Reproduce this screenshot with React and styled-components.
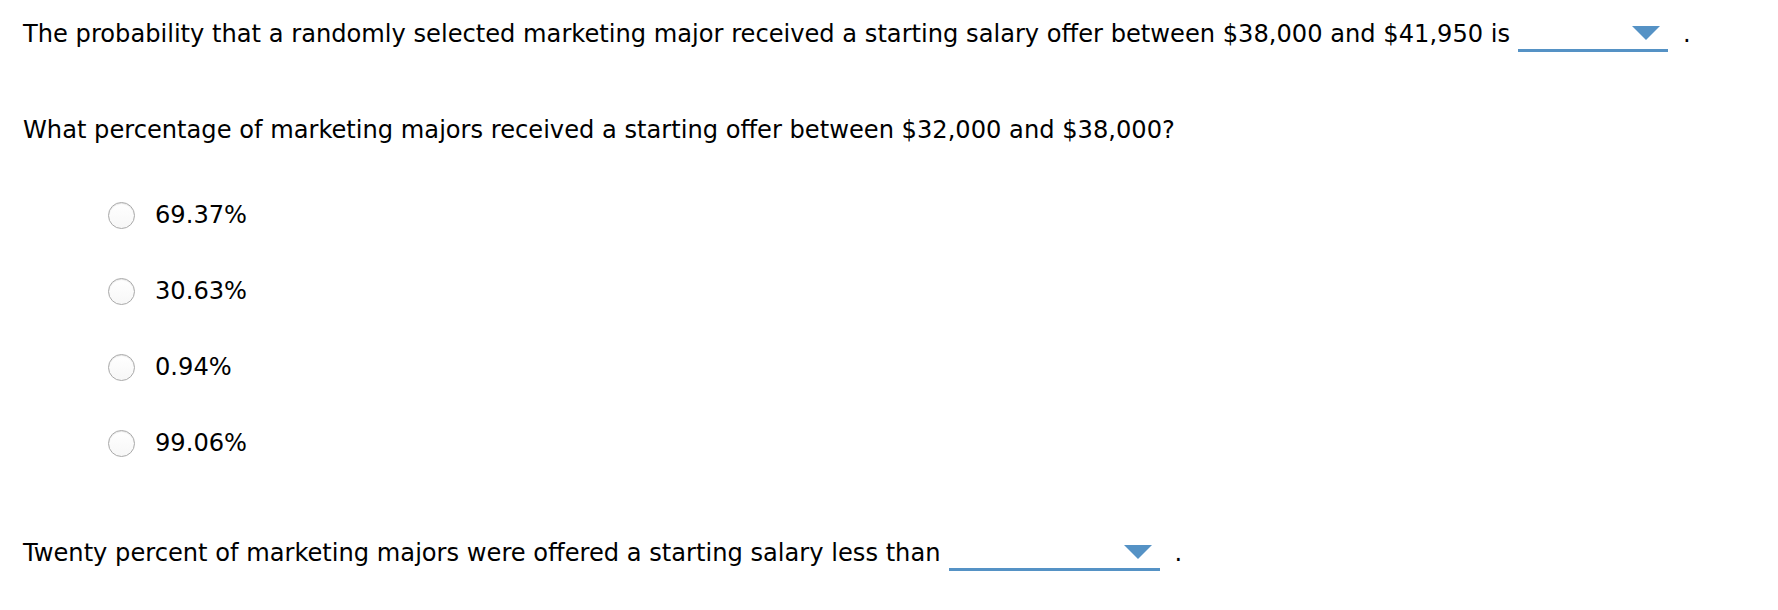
import React from 'react';
import styled, { createGlobalStyle } from 'styled-components';

const Global = createGlobalStyle`
  body {
    margin: 0;
    background: #ffffff;
    font-family: "DejaVu Sans", Verdana, sans-serif;
    color: #000000;
  }
`;

const Page = styled.div`
  min-height: 100vh;
  box-sizing: border-box;
  padding: 20px 0 40px 23px;
  font-size: 24.15px;
  line-height: 28px;
`;

const Line = styled.div`
  display: flex;
  align-items: flex-start;
  white-space: nowrap;
  margin-top: ${p => p.top || 0}px;
`;

const DropWrap = styled.span`
  display: inline-flex;
  align-items: flex-start;
  justify-content: flex-end;
  flex-shrink: 0;
  box-sizing: border-box;
  width: ${p => p.w}px;
  height: 32px;
  margin: 0 ${p => p.after}px -4px 8px;
  padding: 6px 8px 0 0;
  border-bottom: 3px solid #5592c5;
`;

const Caret = styled.span`
  width: 0;
  height: 0;
  border-left: 14px solid transparent;
  border-right: 14px solid transparent;
  border-top: 14px solid #5592c5;
`;

const Options = styled.div`
  margin-top: 57px;
  padding-left: 85px;
  display: flex;
  flex-direction: column;
  gap: 48px;
`;

const Option = styled.label`
  display: flex;
  align-items: center;
  gap: 20px;
  height: 28px;
`;

const Radio = styled.span`
  width: 27px;
  height: 27px;
  box-sizing: border-box;
  border-radius: 50%;
  border: 1px solid #a9a9a9;
  background: linear-gradient(#ffffff, #f7f7f7);
  box-shadow: inset 0 1px 1px rgba(0, 0, 0, 0.1);
`;

const Dropdown = ({ w, after }) => (
  <DropWrap w={w} after={after}>
    <Caret />
  </DropWrap>
);

const choices = ['69.37%', '30.63%', '0.94%', '99.06%'];

export default function App() {
  return (
    <>
      <Global />
      <Page>
        <Line>
          The probability that a randomly selected marketing major received a starting salary offer between $38,000 and $41,950 is
          <Dropdown w={150} after={15} />.
        </Line>
        <Line top={68}>
          What percentage of marketing majors received a starting offer between $32,000 and $38,000?
        </Line>
        <Options>
          {choices.map(c => (
            <Option key={c}>
              <Radio />
              {c}
            </Option>
          ))}
        </Options>
        <Line top={82}>
          Twenty percent of marketing majors were offered a starting salary less than
          <Dropdown w={211} after={15} />.
        </Line>
      </Page>
    </>
  );
}
